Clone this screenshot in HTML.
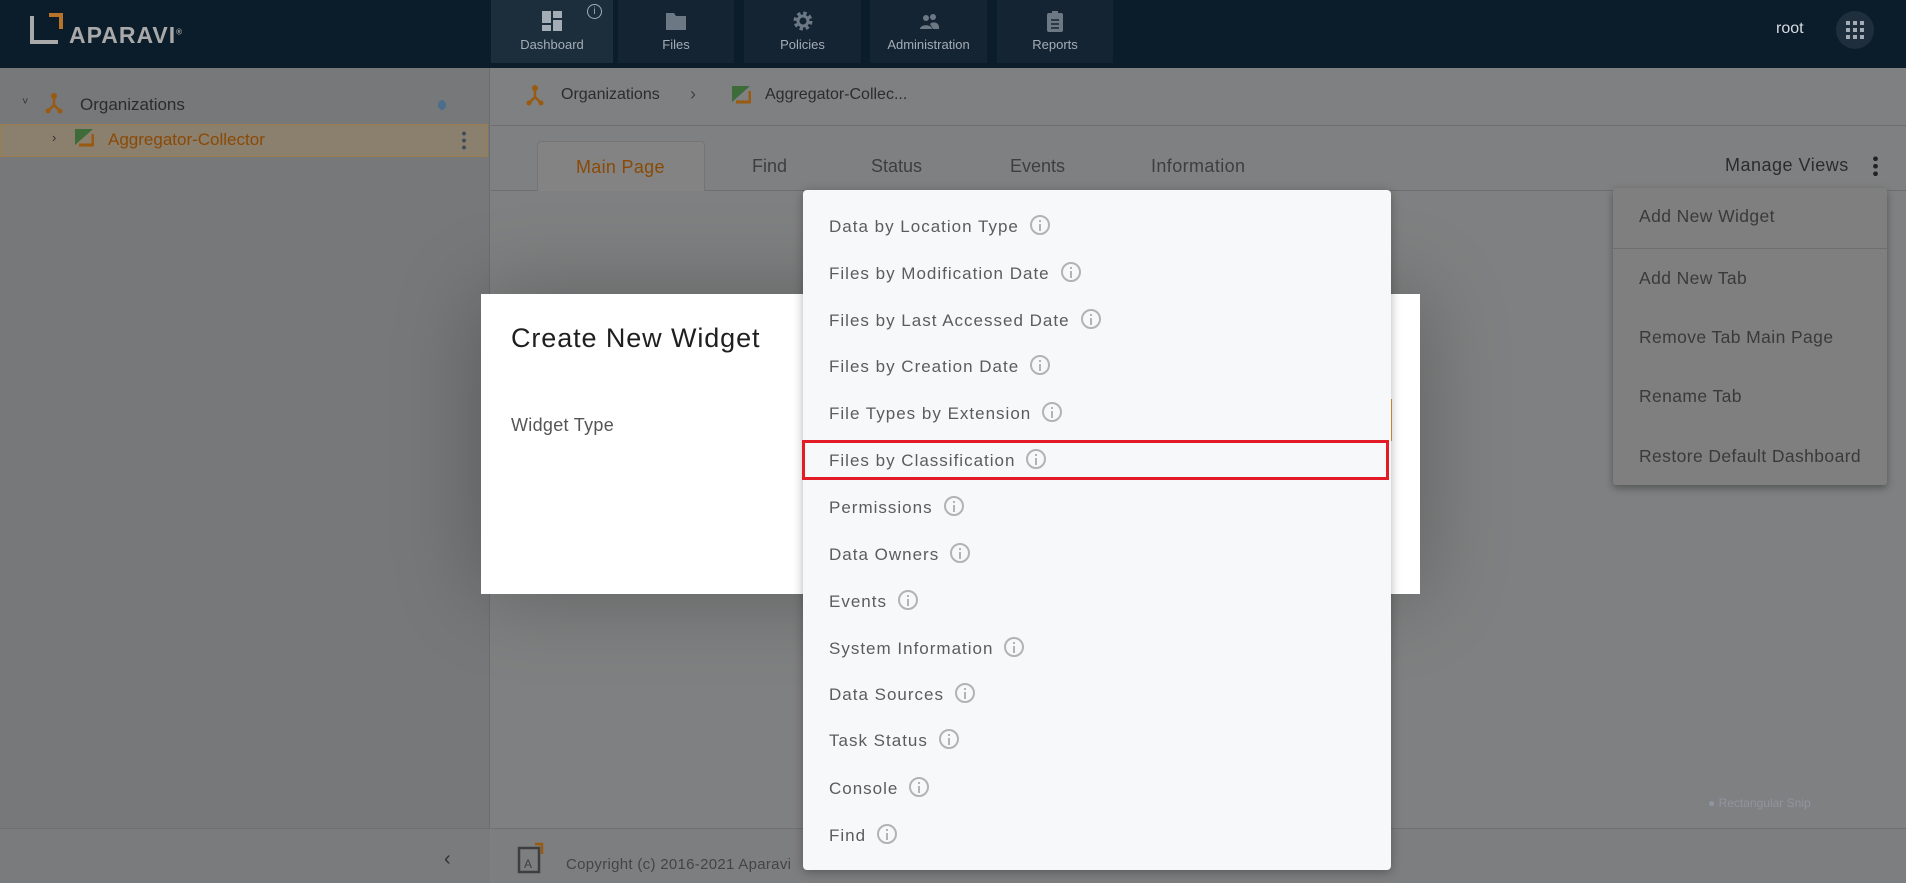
<!DOCTYPE html>
<html><head><style>
*{margin:0;padding:0;box-sizing:border-box}
body{width:1906px;height:883px;overflow:hidden;position:relative;font-family:"Liberation Sans",sans-serif;background:#7f8081}
.a{position:absolute}
.hdr{left:0;top:0;width:1906px;height:68px;background:#0b1d2b}
.nav{top:0;height:63px;background:#142433;color:#a4adb6;font-size:13px;text-align:center}
.nav span{position:absolute;left:0;right:0;top:37px}
.nav svg{position:absolute;left:50%;top:10px;margin-left:-11px}
.item{left:829px;font-size:17px;color:#5c5c5c;letter-spacing:1px}
.info{display:inline-block;width:20px;height:20px;border:2px solid #b3b3b3;border-radius:50%;vertical-align:-3px;margin-left:11px;position:relative}
.info:before{content:"";position:absolute;left:7px;top:3px;width:2px;height:2px;background:#b3b3b3}
.info:after{content:"";position:absolute;left:7px;top:7px;width:2px;height:7px;background:#b3b3b3}
.cm{left:1639px;font-size:17.5px;color:#3a3a3a;letter-spacing:.4px}
</style></head><body>
<div class="a hdr"></div>
<svg class="a" style="left:29px;top:12px" width="36" height="34"><path d="M3 4v26h26" fill="none" stroke="#a9a9a9" stroke-width="4"/><path d="M20 3h12v14" fill="none" stroke="#b8732a" stroke-width="4"/></svg>
<div class="a" style="left:69px;top:22px;font-size:23px;font-weight:bold;color:#a9a9a9;letter-spacing:1px">APARAVI<sup style="font-size:8px">®</sup></div>
<div class="a nav" style="left:491px;width:122px;background:#1c2d3c"><svg width="22" height="22"><rect x="1" y="1" width="9" height="12" fill="#a4adb6"/><rect x="12" y="1" width="9" height="7" fill="#a4adb6"/><rect x="1" y="15" width="9" height="6" fill="#a4adb6"/><rect x="12" y="10" width="9" height="11" fill="#a4adb6"/></svg><span>Dashboard</span></div>
<div class="a" style="left:587px;top:4px;width:15px;height:15px;border:1px solid #a4adb6;border-radius:50%;color:#a4adb6;font-size:10px;text-align:center;line-height:13px">i</div>
<div class="a nav" style="left:618px;width:116px"><svg width="22" height="22"><path d="M1 3h8l2 3h10v14H1z" fill="#6d7885"/></svg><span>Files</span></div>
<div class="a nav" style="left:744px;width:117px"><svg width="22" height="22"><circle cx="11" cy="11" r="7" fill="none" stroke="#6d7885" stroke-width="5" stroke-dasharray="3 2.5"/><circle cx="11" cy="11" r="5" fill="none" stroke="#6d7885" stroke-width="3"/></svg><span>Policies</span></div>
<div class="a nav" style="left:870px;width:117px"><svg width="22" height="22"><circle cx="8" cy="8" r="3" fill="#6d7885"/><circle cx="15" cy="7" r="3" fill="#6d7885"/><path d="M2 19c0-5 12-5 12 0zM12 14c2-3 9-2 9 3v2h-6z" fill="#6d7885"/></svg><span>Administration</span></div>
<div class="a nav" style="left:997px;width:116px"><svg width="22" height="22"><rect x="3" y="3" width="16" height="19" rx="2" fill="#6d7885"/><rect x="8" y="1" width="6" height="4" fill="#6d7885"/><path d="M7 10h8M7 14h8M7 18h8" stroke="#142433" stroke-width="1.5"/></svg><span>Reports</span></div>
<div class="a" style="left:1776px;top:20px;color:#d8dde2;font-size:16px">root</div>
<div class="a" style="left:1836px;top:11px;width:38px;height:38px;border-radius:50%;background:#1f2e3c"></div>
<svg class="a" style="left:1846px;top:21px" width="18" height="18" fill="#a4adb6"><rect x="0" y="0" width="4" height="4"/><rect x="7" y="0" width="4" height="4"/><rect x="14" y="0" width="4" height="4"/><rect x="0" y="7" width="4" height="4"/><rect x="7" y="7" width="4" height="4"/><rect x="14" y="7" width="4" height="4"/><rect x="0" y="14" width="4" height="4"/><rect x="7" y="14" width="4" height="4"/><rect x="14" y="14" width="4" height="4"/></svg>

<div class="a" style="left:0;top:68px;width:490px;height:760px;background:#77787a;border-right:1px solid #6c6c6c"></div>
<div class="a" style="left:0;top:828px;width:490px;height:55px;background:#7a7b7c;border-top:1px solid #6e6e6e"></div>
<div class="a" style="left:444px;top:848px;font-size:20px;color:#333">‹</div>
<div class="a" style="left:22px;top:96px;color:#333;font-size:11px">˅</div>
<svg class="a" style="left:45px;top:92px" width="18" height="22"><circle cx="9" cy="4" r="3" fill="#9a5a10"/><path d="M9 6v7L3 19M9 13l6 6" stroke="#9a5a10" stroke-width="2.5" fill="none"/><circle cx="3" cy="19" r="2.5" fill="#9a5a10"/><circle cx="15" cy="19" r="2.5" fill="#9a5a10"/></svg>
<div class="a" style="left:80px;top:95px;font-size:17px;color:#2c2c2c">Organizations</div>
<div class="a" style="left:438px;top:100px;width:8px;height:10px;border-radius:50%;background:#4c6d8b"></div>
<div class="a" style="left:0;top:124px;width:488px;height:33px;background:#8b7f6e;border:1px solid #9a7e50"></div>
<div class="a" style="left:52px;top:130px;color:#333;font-size:13px">›</div>
<svg class="a" style="left:74px;top:128px" width="20" height="20"><path d="M1 1h18L1 17z" fill="#3d6b3a"/><path d="M5 17h14V6" stroke="#9a5a10" stroke-width="3" fill="none"/></svg>
<div class="a" style="left:108px;top:130px;font-size:17px;color:#8a4a05">Aggregator-Collector</div>
<div class="a" style="left:462px;top:130px;width:4px;height:20px;background:radial-gradient(circle,#3d4b58 1.8px,transparent 2px) 0 0/4px 7px"></div>

<div class="a" style="left:491px;top:125px;width:1415px;height:1px;background:#6e6e6e"></div>
<svg class="a" style="left:526px;top:84px" width="18" height="22"><circle cx="9" cy="4" r="3" fill="#9a5a10"/><path d="M9 6v7L3 19M9 13l6 6" stroke="#9a5a10" stroke-width="2.5" fill="none"/><circle cx="3" cy="19" r="2.5" fill="#9a5a10"/><circle cx="15" cy="19" r="2.5" fill="#9a5a10"/></svg>
<div class="a" style="left:561px;top:86px;font-size:16px;color:#2c2c2c">Organizations</div>
<div class="a" style="left:690px;top:84px;font-size:18px;color:#444">›</div>
<svg class="a" style="left:731px;top:85px" width="20" height="20"><path d="M1 1h18L1 17z" fill="#3d6b3a"/><path d="M5 17h14V6" stroke="#9a5a10" stroke-width="3" fill="none"/></svg>
<div class="a" style="left:765px;top:86px;font-size:16px;color:#2c2c2c">Aggregator-Collec...</div>
<div class="a" style="left:491px;top:190px;width:1415px;height:1px;background:#6e6e6e"></div>
<div class="a" style="left:537px;top:141px;width:168px;height:50px;background:#838383;border:1px solid #747474;border-bottom:none;border-radius:4px 4px 0 0"></div>
<div class="a" style="left:576px;top:157px;font-size:18px;color:#8a4a05;letter-spacing:.3px">Main Page</div>
<div class="a" style="left:752px;top:156px;font-size:18px;color:#3e3e3e">Find</div>
<div class="a" style="left:871px;top:156px;font-size:18px;color:#3e3e3e">Status</div>
<div class="a" style="left:1010px;top:156px;font-size:18px;color:#3e3e3e">Events</div>
<div class="a" style="left:1151px;top:156px;font-size:18px;color:#3e3e3e;letter-spacing:.4px">Information</div>
<div class="a" style="left:1725px;top:155px;font-size:18px;color:#2c2c2c;letter-spacing:.5px">Manage Views</div>
<div class="a" style="left:1873px;top:155px;width:5px;height:22px;background:radial-gradient(circle,#222 2.2px,transparent 2.5px) 0 0/5px 7.5px"></div>
<div class="a" style="left:491px;top:828px;width:1415px;height:55px;background:#7d7e7f;border-top:1px solid #707070"></div>
<svg class="a" style="left:517px;top:842px" width="28" height="32"><path d="M2 6v24h20V6z" fill="none" stroke="#3e3e3e" stroke-width="2.5"/><path d="M18 2h7v10" fill="none" stroke="#9a5a10" stroke-width="2.5"/><text x="7" y="26" font-size="12" fill="#3e3e3e" font-family="Liberation Sans">A</text></svg>
<div class="a" style="left:566px;top:856px;font-size:15px;color:#444;letter-spacing:.3px">Copyright (c) 2016-2021 Aparavi</div>
<div class="a" style="left:1708px;top:796px;font-size:12px;color:#8f95a0">● Rectangular Snip</div>

<div class="a" style="left:1613px;top:188px;width:274px;height:297px;background:#7f7f7f;box-shadow:0 3px 8px rgba(0,0,0,.35);border-radius:3px"></div>
<div class="a" style="left:1613px;top:248px;width:274px;height:1px;background:#6e6e6e"></div>
<div class="a cm" style="top:206px">Add New Widget</div>
<div class="a cm" style="top:268px">Add New Tab</div>
<div class="a cm" style="top:327px">Remove Tab Main Page</div>
<div class="a cm" style="top:386px">Rename Tab</div>
<div class="a cm" style="top:446px">Restore Default Dashboard</div>

<div class="a" style="left:481px;top:294px;width:939px;height:300px;background:#fff;box-shadow:0 0 80px rgba(0,0,0,.25)"></div>
<div class="a" style="left:511px;top:323px;font-size:27px;color:#1f1f1f;letter-spacing:.9px">Create New Widget</div>
<div class="a" style="left:511px;top:415px;font-size:18px;color:#555;letter-spacing:.3px">Widget Type</div>
<div class="a" style="left:1390px;top:399px;width:2px;height:42px;background:#e39a3a"></div>

<div class="a" style="left:803px;top:190px;width:588px;height:680px;background:#f7f8fa;border-radius:4px;box-shadow:0 2px 10px rgba(0,0,0,.3)"></div>
<div class="a item" style="top:215px">Data by Location Type<i class="info"></i></div>
<div class="a item" style="top:262px">Files by Modification Date<i class="info"></i></div>
<div class="a item" style="top:309px">Files by Last Accessed Date<i class="info"></i></div>
<div class="a item" style="top:355px">Files by Creation Date<i class="info"></i></div>
<div class="a item" style="top:402px">File Types by Extension<i class="info"></i></div>
<div class="a item" style="top:449px">Files by Classification<i class="info"></i></div>
<div class="a item" style="top:496px">Permissions<i class="info"></i></div>
<div class="a item" style="top:543px">Data Owners<i class="info"></i></div>
<div class="a item" style="top:590px">Events<i class="info"></i></div>
<div class="a item" style="top:637px">System Information<i class="info"></i></div>
<div class="a item" style="top:683px">Data Sources<i class="info"></i></div>
<div class="a item" style="top:729px">Task Status<i class="info"></i></div>
<div class="a item" style="top:777px">Console<i class="info"></i></div>
<div class="a item" style="top:824px">Find<i class="info"></i></div>
<div class="a" style="left:802px;top:440px;width:587px;height:40px;border:3px solid #e21b26"></div>
</body></html>
